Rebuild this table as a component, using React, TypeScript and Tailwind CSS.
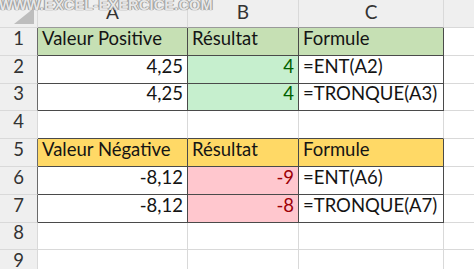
import React from 'react';

const LIGHT = 'border-[#d9d9d9]';
const DARK = 'border-[#4a4a4a]';

type Cell = {
  text?: string;
  bg?: string;
  color?: string;
  align?: 'left' | 'right';
  dark?: boolean;
};

type Row = { n: number; h: string; cells: Cell[]; darkBottom?: boolean; dataRow?: boolean };

const rows: Row[] = [
  {
    n: 1, h: 'h-[28px]', dataRow: true,
    cells: [
      { text: 'Valeur Positive', bg: 'bg-[#c6e0b4]', dark: true },
      { text: 'Résultat', bg: 'bg-[#c6e0b4]', dark: true },
      { text: 'Formule', bg: 'bg-[#c6e0b4]', dark: true },
    ],
  },
  {
    n: 2, h: 'h-[28px]', dataRow: true,
    cells: [
      { text: '4,25', align: 'right', dark: true },
      { text: '4', align: 'right', bg: 'bg-[#c6efce]', color: 'text-[#006100]', dark: true },
      { text: '=ENT(A2)', dark: true },
    ],
  },
  {
    n: 3, h: 'h-[27px]', dataRow: true,
    cells: [
      { text: '4,25', align: 'right', dark: true },
      { text: '4', align: 'right', bg: 'bg-[#c6efce]', color: 'text-[#006100]', dark: true },
      { text: '=TRONQUE(A3)', dark: true },
    ],
  },
  { n: 4, h: 'h-[28px]', darkBottom: true, cells: [{}, {}, {}] },
  {
    n: 5, h: 'h-[28px]', dataRow: true,
    cells: [
      { text: 'Valeur Négative', bg: 'bg-[#ffd966]', dark: true },
      { text: 'Résultat', bg: 'bg-[#ffd966]', dark: true },
      { text: 'Formule', bg: 'bg-[#ffd966]', dark: true },
    ],
  },
  {
    n: 6, h: 'h-[28px]', dataRow: true,
    cells: [
      { text: '-8,12', align: 'right', dark: true },
      { text: '-9', align: 'right', bg: 'bg-[#ffc7ce]', color: 'text-[#9c0006]', dark: true },
      { text: '=ENT(A6)', dark: true },
    ],
  },
  {
    n: 7, h: 'h-[28px]', dataRow: true,
    cells: [
      { text: '-8,12', align: 'right', dark: true },
      { text: '-8', align: 'right', bg: 'bg-[#ffc7ce]', color: 'text-[#9c0006]', dark: true },
      { text: '=TRONQUE(A7)', dark: true },
    ],
  },
  { n: 8, h: 'h-[27px]', cells: [{}, {}, {}] },
  { n: 9, h: 'h-[28px]', cells: [{}, {}, {}] },
];

const widths = ['w-[150px]', 'w-[111px]', 'w-[145px]'];

export default function App() {
  return (
    <div
      className="relative w-[474px] h-[269px] overflow-hidden bg-white text-[#141414]"
      style={{ fontFamily: 'Lato, "Open Sans", sans-serif' }}
    >
      {/* column headers */}
      <div className="flex h-[28px] bg-[#efefef] text-[19px] text-[#333]">
        <div className={`relative w-[38px] shrink-0 border-r border-b ${LIGHT}`}>
          <div className="absolute right-[3px] bottom-[3px] w-0 h-0 border-l-[20px] border-l-transparent border-b-[16px] border-b-[#bdbdbd]" />
        </div>
        {['A', 'B', 'C'].map((l, i) => (
          <div
            key={l}
            className={`${widths[i]} shrink-0 flex items-end justify-center pb-[1px] border-r border-b ${LIGHT} border-b-[#9a9a9a]`}
          >
            {l}
          </div>
        ))}
        <div className={`flex-1 border-b ${LIGHT}`} />
      </div>

      {rows.map((r) => (
        <div key={r.n} className={`flex ${r.h} text-[18.5px]`}>
          <div
            className={`w-[38px] shrink-0 flex items-end justify-center pb-[2px] bg-[#efefef] text-[#333] border-b border-r ${LIGHT} ${r.dataRow ? 'border-r-[#6a6a6a]' : ''}`}
          >
            {r.n}
          </div>
          {r.cells.map((c, i) => (
            <div
              key={i}
              className={`${widths[i]} shrink-0 flex items-end pb-[2px] px-[4px] border-r border-b whitespace-nowrap ${c.dark ? DARK : LIGHT} ${r.darkBottom ? 'border-b-[#4a4a4a]' : ''} ${c.bg ?? ''} ${c.color ?? ''} ${c.align === 'right' ? 'justify-end' : 'justify-start'}`}
            >
              {c.text}
            </div>
          ))}
          <div className={`flex-1 border-b ${LIGHT}`} />
        </div>
      ))}

      {/* watermark */}
      <div
        className="absolute left-[-1px] top-[-5px] text-[14.5px] font-bold tracking-[0.2px] text-white/80 [text-shadow:0_0_1px_#888,0_0_1px_#888,1px_0_0_#aaa,-1px_0_0_#aaa]"
        style={{ fontFamily: '"Liberation Sans", Arial, sans-serif' }}
      >
        WWW.EXCEL-EXERCICE.COM
      </div>
    </div>
  );
}
